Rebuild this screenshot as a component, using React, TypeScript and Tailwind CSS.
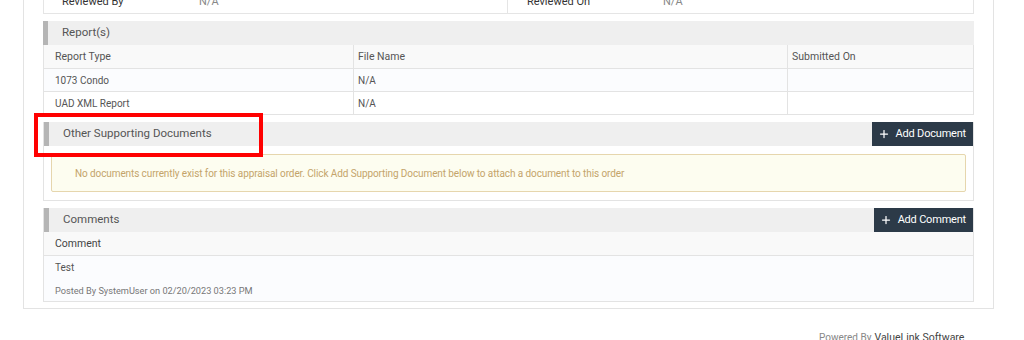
import { Plus } from "lucide-react";

const reports = [
  { type: "1073 Condo", file: "N/A", submitted: "" },
  { type: "UAD XML Report", file: "N/A", submitted: "" },
];

function SectionHeader({ title, action }: { title: string; action?: string }) {
  return (
    <div className="flex h-[24px] items-stretch bg-[#efefef]">
      <span className="w-[5px] bg-[#b5b5b5]" />
      <span className="flex flex-1 items-center pl-[14px] text-[11.5px] text-[#555]">{title}</span>
      {action && (
        <button className="flex items-center gap-[6px] bg-[#2c3a48] pl-[6px] pr-[7px] text-[11px] tracking-[-0.2px] text-white">
          <Plus size={12} strokeWidth={2.5} />
          <span>{action}</span>
        </button>
      )}
    </div>
  );
}

export default function App() {
  return (
    <div
      className="h-[340px] w-[1024px] overflow-hidden bg-white"
      style={{ fontFamily: "Roboto, 'Liberation Sans', sans-serif" }}
    >
      {/* outer panel */}
      <div className="ml-[23px] mt-[-20px] w-[971px] border border-[#e3e3e3] px-[19px] pb-[6px] pt-[9px]">
        {/* reviewed row */}
        <div className="flex h-[24px] border border-[#e5e5e5] text-[11px] text-[#333]">
          <div className="flex w-[464px] items-center border-r border-[#e5e5e5]">
            <span className="w-[155px] pl-[18px]">Reviewed By</span>
            <span className="text-[#888]">N/A</span>
          </div>
          <div className="flex flex-1 items-center">
            <span className="w-[155px] pl-[19px]">Reviewed On</span>
            <span className="text-[#888]">N/A</span>
          </div>
        </div>

        {/* reports */}
        <div className="mt-[7px]">
          <SectionHeader title="Report(s)" />
          <div className="border-x border-b border-[#e3e3e3] text-[10.5px] text-[#555]">
            <div className="grid h-[23px] grid-cols-[310px_434px_1fr] bg-[#f9f9f9]">
              <div className="flex items-center border-r border-[#e3e3e3] pl-[11px]">Report Type</div>
              <div className="flex items-center border-r border-[#e3e3e3] pl-[4px]">File Name</div>
              <div className="flex items-center pl-[4px]">Submitted On</div>
            </div>
            {reports.map((r, i) => (
              <div
                key={r.type}
                className={`grid h-[23px] grid-cols-[310px_434px_1fr] border-t border-[#e3e3e3] ${
                  i === 0 ? "bg-[#fbfcfe]" : "bg-white"
                }`}
              >
                <div className="flex items-center border-r border-[#e3e3e3] pl-[11px] text-[10px]">{r.type}</div>
                <div className="flex items-center border-r border-[#e3e3e3] pl-[4px] text-[10px]">{r.file}</div>
                <div className="flex items-center pl-[4px]">{r.submitted}</div>
              </div>
            ))}
          </div>
        </div>

        {/* other supporting documents */}
        <div className="relative mt-[7px] border-x border-b border-[#e3e3e3]">
          <SectionHeader title="Other Supporting Documents" action="Add Document" />
          <div className="px-[7px] py-[8px]">
            <div className="flex h-[38px] items-center rounded-[2px] border border-[#e6d6ad] bg-[#fdfdf0] pl-[23px] text-[10px] tracking-[-0.1px] text-[#c4a46a]">
              No documents currently exist for this appraisal order. Click Add Supporting Document below to attach a document to this order
            </div>
          </div>
          <div className="absolute left-[-10px] top-[-9px] h-[44px] w-[229px] border-[4px] border-[#ff0000]" />
        </div>

        {/* comments */}
        <div className="mt-[7px] border-x border-b border-[#e3e3e3]">
          <SectionHeader title="Comments" action="Add Comment" />
          <div className="flex h-[23px] items-center bg-[#f9f9f9] pl-[11px] text-[10.5px] text-[#444]">Comment</div>
          <div className="h-[46px] border-t border-[#e3e3e3] bg-[#fbfcfe] pl-[11px] pt-[5px]">
            <div className="text-[10px] leading-[14px] text-[#555]">Test</div>
            <div className="mt-[9px] text-[9.2px] leading-[14px] text-[#777]">Posted By SystemUser on 02/20/2023 03:23 PM</div>
          </div>
        </div>
      </div>

      {/* footer */}
      <div className="mt-[21px] flex items-baseline pl-[819px] text-[#888]">
        <span className="text-[10px]">Powered By</span>
        <span className="ml-[3px] text-[10.5px] text-[#444]">ValueLink Software</span>
      </div>
    </div>
  );
}
